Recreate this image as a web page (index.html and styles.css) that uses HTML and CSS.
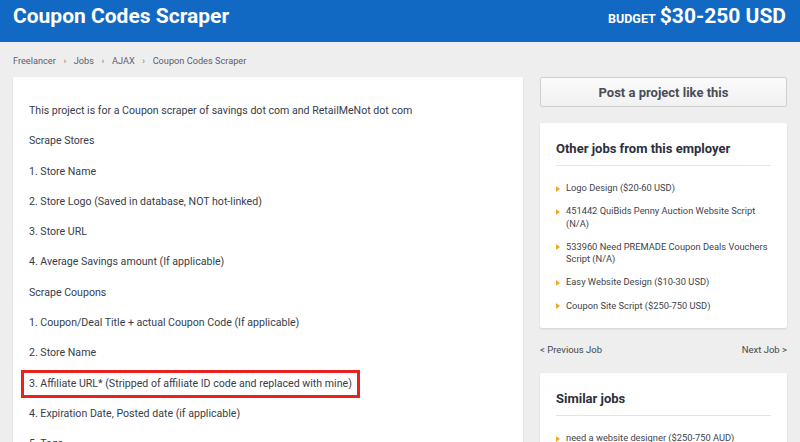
FILE: index.html
```html
<!DOCTYPE html>
<html>
<head>
<meta charset="utf-8">
<link rel="stylesheet" href="styles.css">
</head>
<body>
<header class="topbar">
  <h1 class="title">Coupon Codes Scraper</h1>
  <div class="budget"><span class="budget-label">BUDGET</span> <span class="budget-value">$30-250 USD</span></div>
</header>
<nav class="crumbs">
  <a>Freelancer</a><span class="sep">›</span><a>Jobs</a><span class="sep">›</span><a>AJAX</a><span class="sep">›</span><span>Coupon Codes Scraper</span>
</nav>
<div class="layout">
  <main class="card main">
    <p>This project is for a Coupon scraper of savings dot com and RetailMeNot dot com</p>
    <p>Scrape Stores</p>
    <p>1. Store Name</p>
    <p>2. Store Logo (Saved in database, NOT hot-linked)</p>
    <p>3. Store URL</p>
    <p>4. Average Savings amount (If applicable)</p>
    <p>Scrape Coupons</p>
    <p>1. Coupon/Deal Title + actual Coupon Code (If applicable)</p>
    <p>2. Store Name</p>
    <p><span class="highlight">3. Affiliate URL* (Stripped of affiliate ID code and replaced with mine)</span></p>
    <p>4. Expiration Date, Posted date (if applicable)</p>
    <p>5. Tags</p>
  </main>
  <aside class="side">
    <button class="post-btn">Post a project like this</button>
    <section class="card widget">
      <h2>Other jobs from this employer</h2>
      <ul class="jobs">
        <li>Logo Design ($20-60 USD)</li>
        <li>451442 QuiBids Penny Auction Website Script (N/A)</li>
        <li>533960 Need PREMADE Coupon Deals Vouchers Script (N/A)</li>
        <li>Easy Website Design ($10-30 USD)</li>
        <li>Coupon Site Script ($250-750 USD)</li>
      </ul>
    </section>
    <div class="pager"><a>&lt; Previous Job</a><a>Next Job &gt;</a></div>
    <section class="card widget">
      <h2>Similar jobs</h2>
      <ul class="jobs">
        <li>need a website designer ($250-750 AUD)</li>
        <li>Website Development ($30-250 USD)</li>
      </ul>
    </section>
  </aside>
</div>
</body>
</html>
```
FILE: styles.css
```css
* { box-sizing: border-box; }
html, body { margin: 0; padding: 0; }
body {
  background: #eeeeee;
  font-family: Roboto, "Liberation Sans", sans-serif;
  color: #3b4250;
  overflow: hidden;
  height: 442px;
}
.topbar {
  height: 42px;
  background: #1169c4;
  color: #fff;
  display: flex;
  justify-content: space-between;
  align-items: baseline;
  padding: 2px 14px 0 13px;
}
.title {
  margin: 0;
  font-size: 21px;
  line-height: 28px;
  font-weight: 700;
}
.budget { font-weight: 700; line-height: 28px; }
.budget-label { font-size: 12.5px; }
.budget-value { font-size: 21px; }
.crumbs {
  font-size: 9.2px;
  color: #5d6068;
  padding: 13px 13px 0;
  height: 35px;
  line-height: 12px;
}
.crumbs .sep { margin: 0 7.6px; color: #777; }
.layout {
  display: flex;
  gap: 17px;
  padding: 0 13px;
  align-items: flex-start;
}
.card {
  background: #fff;
  border-radius: 2px;
  box-shadow: 0 1px 2px rgba(0,0,0,0.12);
}
.main {
  width: 510px;
  flex: none;
  padding: 26px 16px;
  font-size: 10.6px;
  color: #363d4a;
}
.main p {
  margin: 0 0 13.8px;
  line-height: 16.5px;
}
.highlight {
  display: inline-block;
  padding: 3px 5px;
  margin: -3px -5px;
  outline: 3px solid #e8221e;
}
.side { width: 247px; flex: none; }
.post-btn {
  display: block;
  width: 100%;
  height: 30px;
  border: 1px solid #cfcfcf;
  border-radius: 2px;
  background: linear-gradient(#fbfbfb, #f1f1f1);
  font-family: Roboto, "Liberation Sans", sans-serif;
  font-weight: 700;
  font-size: 13px;
  color: #4a4d55;
  padding: 0;
  margin-bottom: 16px;
}
.widget { padding: 17px 16px 16px; }
.widget h2 {
  margin: 0;
  font-size: 13px;
  line-height: 17px;
  font-weight: 700;
  color: #2b303b;
  padding-bottom: 8px;
  border-bottom: 1px solid #e4e4e4;
  margin-bottom: 16px;
}
.jobs { list-style: none; margin: 0; padding: 0; font-size: 9.3px; color: #40444c; }
.jobs li {
  position: relative;
  padding-left: 10px;
  line-height: 12.6px;
  margin-bottom: 10.5px;
}
.jobs li:last-child { margin-bottom: 0; }
.jobs li::before {
  content: "";
  position: absolute;
  left: 0;
  top: 3.5px;
  border-left: 4px solid #f5a623;
  border-top: 3px solid transparent;
  border-bottom: 3px solid transparent;
}
.pager {
  display: flex;
  justify-content: space-between;
  font-size: 9.5px;
  color: #444851;
  line-height: 12px;
  margin: 16px 0 17px;
}
```
